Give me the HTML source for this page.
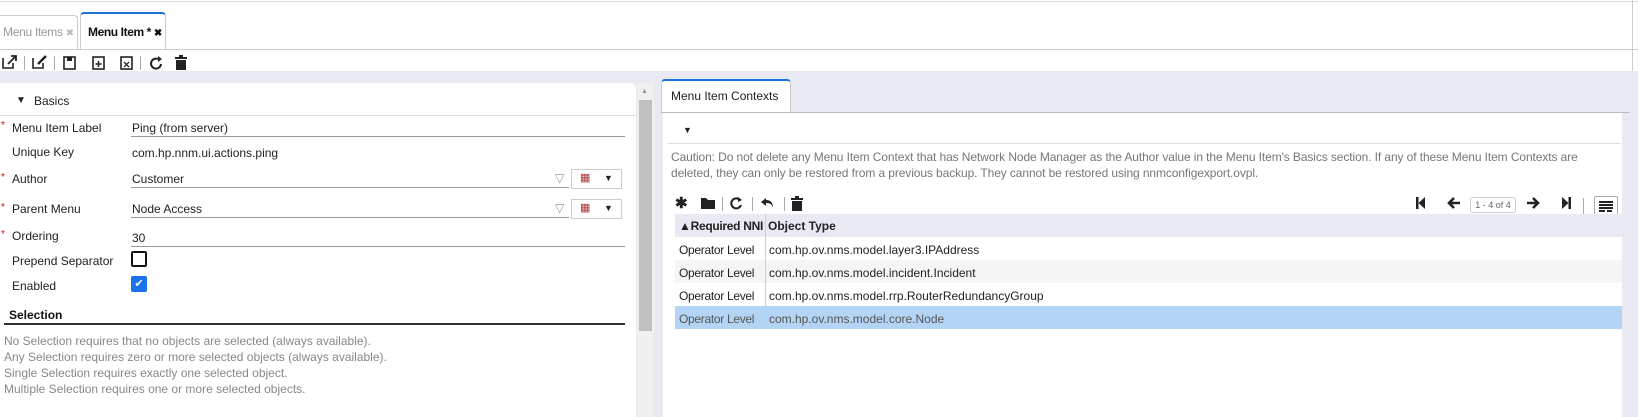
<!DOCTYPE html>
<html><head><meta charset="utf-8"><style>
*{margin:0;padding:0;box-sizing:border-box}
body{width:1638px;height:417px;overflow:hidden;background:#fff;font-family:"Liberation Sans",sans-serif;font-size:12px;color:#222;position:relative}
.a{position:absolute}
.t{position:absolute;white-space:nowrap}
.ul{position:absolute;height:1px;background:#999}
.star{color:#d00;position:absolute;font-size:10px}
.sep{position:absolute;width:1px;background:#aaa}
</style></head><body>
<div class="a" style="left:0;top:1px;width:1638px;height:1px;background:#ddd"></div>
<div class="a" style="left:1632px;top:0;width:1px;height:71px;background:#ccc"></div>
<div class="a" style="left:0;top:15px;width:78px;height:34px;border:1px solid #ccc;border-left:none;border-bottom:none;border-radius:0 4px 0 0"></div>
<div class="t" style="left:3px;top:25px;color:#999;letter-spacing:-0.3px">Menu Items <span style="color:#bbb;font-size:10px">✖</span></div>
<div class="a" style="left:80px;top:12px;width:86px;height:37px;border:1px solid #ccc;border-top:2px solid #1a73d9;border-bottom:none;border-radius:4px 4px 0 0;background:#fff"></div>
<div class="t" style="left:88px;top:25px;font-weight:bold;color:#111;letter-spacing:-0.4px">Menu Item * <span style="font-size:10px">✖</span></div>
<div class="a" style="left:0;top:49px;width:1638px;height:1px;background:#ccc"></div>
<svg class="a" style="left:2px;top:54px" width="16" height="16"><path d="M1 4v10h10V9" fill="none" stroke="#222" stroke-width="1.6"/><path d="M6 10L14 2M9 2h5v5" fill="none" stroke="#222" stroke-width="1.8"/></svg>
<div class="sep" style="left:24px;top:56px;height:14px"></div>
<svg class="a" style="left:32px;top:54px" width="16" height="16"><path d="M1 4v10h10V9" fill="none" stroke="#222" stroke-width="1.6"/><path d="M6 10L14 2" stroke="#222" stroke-width="2.4"/></svg>
<div class="sep" style="left:54px;top:56px;height:14px"></div>
<svg class="a" style="left:62px;top:55px" width="110" height="16">
<rect x="2" y="2" width="11" height="12" fill="none" stroke="#222" stroke-width="1.6"/><rect x="5" y="2" width="5" height="4" fill="#222"/>
<rect x="31" y="2" width="11" height="12" fill="none" stroke="#222" stroke-width="1.6"/><path d="M36.5 6v6M33.5 9h6" stroke="#222" stroke-width="1.5"/>
<rect x="59" y="2" width="11" height="12" fill="none" stroke="#222" stroke-width="1.6"/><path d="M62 7l5 5M67 7l-5 5" stroke="#222" stroke-width="1.3"/>
<path d="M96 4a5 5 0 1 0 3 5" fill="none" stroke="#222" stroke-width="2"/><path d="M96 1l4 3-4 3z" fill="#222"/>
</svg>
<div class="sep" style="left:140px;top:56px;height:14px"></div>
<svg class="a" style="left:174px;top:55px" width="14" height="16"><rect x="1" y="2" width="12" height="2" fill="#222"/><rect x="5" y="0" width="4" height="2" fill="#222"/><rect x="2" y="5" width="10" height="10" fill="#222"/></svg>
<div class="a" style="left:0;top:71px;width:1638px;height:346px;background:#e9e9f4"></div>
<div class="a" style="left:0;top:83px;width:636px;height:334px;background:#fff;border-radius:0 6px 0 0"></div>
<div class="t" style="left:16px;top:95px;font-size:10px">▼</div>
<div class="t" style="left:34px;top:94px">Basics</div>
<div class="a" style="left:0;top:115px;width:636px;height:1px;background:#ddd"></div>
<div class="star" style="left:1px;top:120px">*</div><div class="t" style="left:12px;top:121px">Menu Item Label</div>
<div class="t" style="left:132px;top:121px">Ping (from server)</div><div class="ul" style="left:131px;top:136px;width:494px"></div>
<div class="t" style="left:12px;top:145px">Unique Key</div><div class="t" style="left:132px;top:146px">com.hp.nnm.ui.actions.ping</div>
<div class="star" style="left:1px;top:172px">*</div><div class="t" style="left:12px;top:172px">Author</div>
<div class="t" style="left:132px;top:172px">Customer</div><div class="ul" style="left:131px;top:187px;width:438px"></div>
<div class="t" style="left:555px;top:171px;color:#999">▽</div>
<div class="a" style="left:571px;top:169px;width:51px;height:20px;border:1px solid #ccc"></div>
<div class="t" style="left:580px;top:171px;font-size:11px;color:#a33">▦</div><div class="t" style="left:604px;top:173px;font-size:9px">▼</div>
<div class="star" style="left:1px;top:202px">*</div><div class="t" style="left:12px;top:202px">Parent Menu</div>
<div class="t" style="left:132px;top:202px">Node Access</div><div class="ul" style="left:131px;top:217px;width:438px"></div>
<div class="t" style="left:555px;top:201px;color:#999">▽</div>
<div class="a" style="left:571px;top:199px;width:51px;height:20px;border:1px solid #ccc"></div>
<div class="t" style="left:580px;top:201px;font-size:11px;color:#a33">▦</div><div class="t" style="left:604px;top:203px;font-size:9px">▼</div>
<div class="star" style="left:1px;top:229px">*</div><div class="t" style="left:12px;top:229px">Ordering</div>
<div class="t" style="left:132px;top:231px">30</div><div class="ul" style="left:131px;top:246px;width:494px"></div>
<div class="t" style="left:12px;top:254px">Prepend Separator</div>
<div class="a" style="left:131px;top:251px;width:16px;height:16px;border:2px solid #111;border-radius:2px"></div>
<div class="t" style="left:12px;top:279px">Enabled</div>
<div class="a" style="left:131px;top:276px;width:16px;height:16px;background:#1a73e8;border-radius:2px;color:#fff;font-size:11px;text-align:center;line-height:16px">✔</div>
<div class="t" style="left:9px;top:308px;font-weight:bold;color:#111">Selection</div>
<div class="a" style="left:4px;top:323px;width:621px;height:2px;background:#333"></div>
<div class="t" style="left:4px;top:333px;color:#888;line-height:16px">No Selection requires that no objects are selected (always available).<br>Any Selection requires zero or more selected objects (always available).<br>Single Selection requires exactly one selected object.<br>Multiple Selection requires one or more selected objects.</div>
<div class="a" style="left:637px;top:83px;width:17px;height:334px;background:#f0f0f0"></div>
<div class="t" style="left:641px;top:88px;font-size:7px;color:#999">▲</div>
<div class="a" style="left:639px;top:100px;width:13px;height:231px;background:#c0c0c0"></div>
<div class="a" style="left:661px;top:79px;width:130px;height:33px;background:#fff;border:1px solid #ccc;border-top:2px solid #1a73d9;border-bottom:none;border-radius:4px 4px 0 0"></div>
<div class="t" style="left:671px;top:89px">Menu Item Contexts</div>
<div class="a" style="left:661px;top:112px;width:969px;height:1px;background:#bbb"></div>
<div class="a" style="left:663px;top:113px;width:959px;height:304px;background:#fff"></div>
<div class="t" style="left:683px;top:125px;font-size:9px">▼</div>
<div class="a" style="left:668px;top:143px;width:952px;height:1px;background:#ddd"></div>
<div class="t" style="left:671px;top:149px;color:#777;line-height:16px;letter-spacing:-0.1px">Caution: Do not delete any Menu Item Context that has Network Node Manager as the Author value in the Menu Item's Basics section. If any of these Menu Item Contexts are<br>deleted, they can only be restored from a previous backup. They cannot be restored using nnmconfigexport.ovpl.</div>
<div class="t" style="left:675px;top:194px;font-size:15px;font-weight:bold">✱</div>
<svg class="a" style="left:700px;top:196px" width="16" height="14"><path d="M1 2h5l2 2h7v9H1z" fill="#222"/></svg>
<div class="sep" style="left:722px;top:197px;height:14px"></div>
<svg class="a" style="left:728px;top:196px" width="16" height="14"><path d="M12 4a5 5 0 1 0 1 5" fill="none" stroke="#222" stroke-width="2"/><path d="M10 1l4 3-4 2z" fill="#222"/></svg>
<div class="sep" style="left:752px;top:197px;height:14px"></div>
<svg class="a" style="left:760px;top:196px" width="16" height="14"><path d="M6 2L1 6l5 4V7c4 0 6 1 7 5 0-5-2-8-7-8z" fill="#222"/></svg>
<div class="sep" style="left:784px;top:197px;height:14px"></div>
<svg class="a" style="left:790px;top:196px" width="14" height="16"><rect x="1" y="2" width="12" height="2" fill="#222"/><rect x="5" y="0" width="4" height="2" fill="#222"/><rect x="2" y="5" width="10" height="10" fill="#222"/></svg>
<svg class="a" style="left:1414px;top:196px" width="14" height="14"><rect x="2" y="1" width="2.5" height="12" fill="#222"/><path d="M11 1v12L4.5 7z" fill="#222"/></svg>
<svg class="a" style="left:1446px;top:196px" width="16" height="14"><path d="M14 7H3M8 2L3 7l5 5" fill="none" stroke="#222" stroke-width="2.6"/></svg>
<div class="a" style="left:1470px;top:197px;width:46px;height:16px;border:1px solid #ccc;border-radius:3px;font-size:9px;color:#666;text-align:center;line-height:14px">1 - 4 of 4</div>
<svg class="a" style="left:1525px;top:196px" width="16" height="14"><path d="M2 7h11M8 2l5 5-5 5" fill="none" stroke="#222" stroke-width="2.6"/></svg>
<svg class="a" style="left:1559px;top:196px" width="14" height="14"><path d="M3 1v12L9.5 7z" fill="#222"/><rect x="9.5" y="1" width="2.5" height="12" fill="#222"/></svg>
<div class="sep" style="left:1583px;top:198px;height:16px"></div>
<div class="a" style="left:1594px;top:196px;width:24px;height:20px;border:1px solid #aaa;border-radius:2px"></div>
<svg class="a" style="left:1598px;top:200px" width="16" height="14"><path d="M1 2h14M1 5h14M1 8h14M1 11h6" stroke="#222" stroke-width="2"/><path d="M9 11h5" stroke="#222" stroke-width="2"/></svg>
<div class="a" style="left:675px;top:214px;width:947px;height:23px;background:#e9e9f4"></div>
<div class="t" style="left:679px;top:219px;font-weight:bold;width:84px;overflow:hidden;letter-spacing:-0.3px">▲Required NNI</div>
<div class="t" style="left:768px;top:219px;font-weight:bold">Object Type</div>
<div class="a" style="left:675px;top:260px;width:947px;height:23px;background:#f5f5f5"></div>
<div class="a" style="left:675px;top:306px;width:947px;height:23px;background:#b3d4f5"></div>
<div class="a" style="left:765px;top:214px;width:1px;height:115px;background:#ccd"></div>
<div class="t" style="left:679px;top:243px;letter-spacing:-0.3px">Operator Level</div><div class="t" style="left:769px;top:243px">com.hp.ov.nms.model.layer3.IPAddress</div>
<div class="t" style="left:679px;top:266px;letter-spacing:-0.3px">Operator Level</div><div class="t" style="left:769px;top:266px">com.hp.ov.nms.model.incident.Incident</div>
<div class="t" style="left:679px;top:289px;letter-spacing:-0.3px">Operator Level</div><div class="t" style="left:769px;top:289px">com.hp.ov.nms.model.rrp.RouterRedundancyGroup</div>
<div class="t" style="left:679px;top:312px;color:#555;letter-spacing:-0.3px">Operator Level</div><div class="t" style="left:769px;top:312px;color:#555">com.hp.ov.nms.model.core.Node</div>
</body></html>
